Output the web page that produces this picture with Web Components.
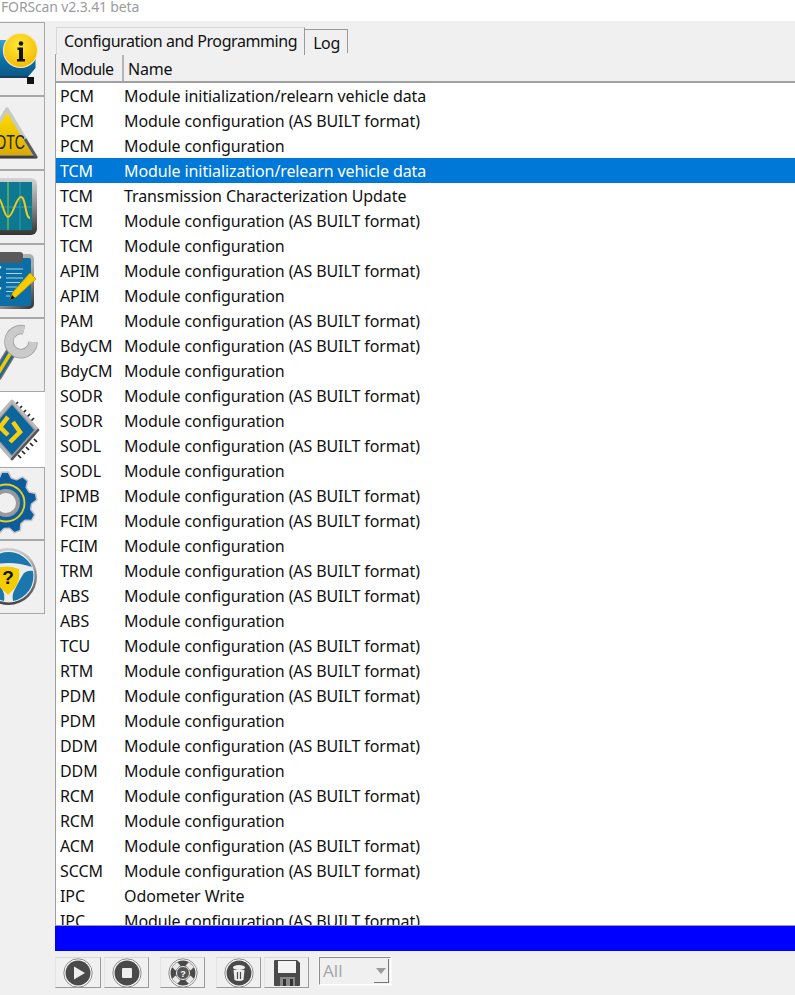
<!DOCTYPE html>
<html>
<head>
<meta charset="utf-8">
<title>FORScan</title>
<style>
html, body { margin: 0; padding: 0; background: #f0f0f0; }
body { width: 795px; height: 995px; overflow: hidden; font: 16px Tahoma, "Noto Sans", sans-serif; }
</style>
</head>
<body>
<forscan-app>
    <side-button slot="side" style="height:74px"><svg width="45" height="73" viewBox="0 0 45 73">
        <defs>
            <linearGradient id="lap" x1="0" y1="0" x2="0" y2="1"><stop offset="0" stop-color="#3aa0d0"/><stop offset=".55" stop-color="#0c6ea6"/><stop offset="1" stop-color="#0a5584"/></linearGradient>
            <radialGradient id="coin" cx=".45" cy=".35" r=".7"><stop offset="0" stop-color="#ffe93a"/><stop offset="1" stop-color="#f2b700"/></radialGradient>
        </defs>
        <path d="M-4 17H34Q36 17 35.500 24V45L27 55H-4Z" fill="url(#lap)"/>
        <path d="M-4 53H28L27 55H-4Z" fill="#1b3e56"/>
        <rect x="27" y="54" width="7" height="7" fill="#111"/>
        <circle cx="20.500" cy="27.500" r="17" fill="url(#coin)" stroke="#f7e7a8" stroke-width="1.200"/>
        <circle cx="21" cy="20.500" r="2.300" fill="#111"/>
        <path d="M17.500 24.500h5.500v11.500h2v2.500h-8v-2.500h2v-9h-1.500z" fill="#111"/>
    </svg></side-button>
    <side-button slot="side" style="height:74px"><svg width="45" height="73" viewBox="0 0 45 73">
        <defs><linearGradient id="warn" x1="0" y1="0" x2="0" y2="1"><stop offset="0" stop-color="#ffe100"/><stop offset="1" stop-color="#d8a800"/></linearGradient></defs>
        <path d="M7 12L-22 60H36Z" fill="url(#warn)" stroke="#c9c9c9" stroke-width="3.500" stroke-linejoin="round"/>
        <path d="M-22 60H36" stroke="#3e3e3e" stroke-width="3" stroke-linecap="round"/>
        <path d="M36 60L25 42" stroke="#5a5a5a" stroke-width="3"/>
        <text x="-4" y="52" font-family="Liberation Sans" font-size="20" fill="#222" textLength="29" lengthAdjust="spacingAndGlyphs">DTC</text>
    </svg></side-button>
    <side-button slot="side" style="height:74px"><svg width="45" height="73" viewBox="0 0 45 73">
        <defs><linearGradient id="bezel" x1="0" y1="0" x2="0" y2="1"><stop offset="0" stop-color="#d4d4d4"/><stop offset=".5" stop-color="#8a8a8a"/><stop offset="1" stop-color="#333"/></linearGradient></defs>
        <rect x="-24" y="7" width="61" height="57" rx="6" fill="url(#bezel)"/>
        <rect x="-20" y="11" width="52" height="48" fill="#0e7891"/>
        <path d="M-20 36H32M20 11V59" stroke="#3d9aa6" stroke-width="1"/>
        <path d="M8 11V59" stroke="#4ea56c" stroke-width="2"/>
        <path d="M-2 27C2 27 4 46 8 46C13 46 16 26 21 26C26 26 25 47 30 47" fill="none" stroke="#e8cc1e" stroke-width="2"/>
    </svg></side-button>
    <side-button slot="side" style="height:74px"><svg width="45" height="73" viewBox="0 0 45 73">
        <defs><linearGradient id="board" x1="0" y1="0" x2="1" y2="1"><stop offset="0" stop-color="#d0d0d0"/><stop offset=".6" stop-color="#a8a8a8"/><stop offset="1" stop-color="#2e2e2e"/></linearGradient></defs>
        <rect x="-20" y="9" width="54" height="55" rx="5" fill="url(#board)"/>
        <rect x="-20" y="13" width="51" height="48" rx="2" fill="#0c6ea6"/>
        <rect x="-10" y="7" width="33" height="11" rx="3" fill="#5a5a5a"/>
        <path d="M6 24H23M6 28.500H22M6 33H23M6 37.500H20M6 42H17M6 46.500H13M6 51H10" stroke="#a6d4e8" stroke-width="1.200"/>
        <path d="M-1 24l2-2.500M-1 34l2-2.500M-1 45l2-2.500" stroke="#fff" stroke-width="1.500"/>
        <path d="M30 28L36 34L16 52L10 55L13 47Z" fill="#f4cd00" stroke="#c89a00" stroke-width=".8"/>
        <path d="M10 55L12 50L15 53Z" fill="#111"/>
    </svg></side-button>
    <side-button slot="side" style="height:74px"><svg width="45" height="73" viewBox="0 0 45 73">
        <path d="M13 30L-4 58" stroke="#6e6e6e" stroke-width="11"/>
        <path d="M13 30L-4 58" stroke="#1b6a9c" stroke-width="8"/>
        <path d="M13 30L-4 58" stroke="#f0c800" stroke-width="3.500"/>
        <path d="M24 11A12 12 0 1 0 33 23" fill="none" stroke="#9a9a9a" stroke-width="9.500"/>
        <path d="M24 11A12 12 0 1 0 33 23" fill="none" stroke="#cacaca" stroke-width="8"/>
    </svg></side-button>
    <side-button slot="side" selected style="height:75px"><svg width="45" height="75" viewBox="0 0 45 75">
        <path d="M18 10l-3 3M22 14l-3 3M26 18l-3 3M30 22l-3 3M34 26l-3 3M37 50l-3-3M33 54l-3-3M29 58l-3-3M25 62l-3-3M21 66l-3-3" stroke="#222" stroke-width="1.700"/>
        <path d="M12 9L38 38L12 67L-14 38Z" fill="#9a9a9a" stroke="#b9b9b9" stroke-width="3" stroke-linejoin="round"/>
        <path d="M38 38L12 67" stroke="#555" stroke-width="2.500" stroke-linecap="round"/>
        <path d="M12 13L34 38L12 63L-10 38Z" fill="#0c659d"/>
        <path d="M8 25L0 35L8 43M13 30L20 40L10 50" fill="none" stroke="#f3cf0e" stroke-width="4.500"/>
    </svg></side-button>
    <side-button slot="side" style="height:73px"><gear-icon></gear-icon></side-button>
    <side-button slot="side" style="height:74px"><svg width="45" height="73" viewBox="0 0 45 73">
        <defs><linearGradient id="rim" x1="0" y1="0" x2="0" y2="1"><stop offset="0" stop-color="#d0d0d0"/><stop offset="1" stop-color="#444"/></linearGradient></defs>
        <circle cx="8.500" cy="35.500" r="28.500" fill="url(#rim)"/>
        <circle cx="8.500" cy="35.500" r="26" fill="#ececec"/>
        <path d="M-15 26A26 26 0 0 1 32 26Q8 18 -15 26Z" fill="#1a76ad"/>
        <path d="M33 30A25.500 25.500 0 0 1 13 60Q12 54 14 50Q20 38 24 32Q28 29 33 30Z" fill="#1a76ad"/>
        <path d="M-16 30A25.500 25.500 0 0 0 4 60Q5 54 3 50Q-3 38 -7 32Q-11 29 -16 30Z" fill="#1a76ad"/>
        <path d="M-8 28Q8 23 19 28Q21 42 12 50L8 54L4 50Q-6 42 -8 28Z" fill="#f5cc00"/>
        <text x="8" y="43" text-anchor="middle" font-family="Liberation Sans" font-size="19" font-weight="bold" fill="#111">?</text>
    </svg></side-button>

    <tab-item slot="tabs" active>Configuration and Programming</tab-item>
    <tab-item slot="tabs">Log</tab-item>

    <module-table slot="table"></module-table>

    <tool-button slot="tools" style="width:46px"><svg width="30" height="30" viewBox="0 0 30 30"><circle cx="15" cy="15" r="14.200" fill="#fff" stroke="#8a8a8a"/><circle cx="15" cy="15" r="12.500" fill="#4a4a4a"/><path d="M11 8.500L22 15L11 21.500Z" fill="#eee"/></svg></tool-button>
    <tool-button slot="tools"><svg width="30" height="30" viewBox="0 0 30 30"><circle cx="15" cy="15" r="14.200" fill="#fff" stroke="#8a8a8a"/><circle cx="15" cy="15" r="12.500" fill="#4a4a4a"/><rect x="10" y="10" width="10" height="10" rx="1" fill="#eee"/></svg></tool-button>
    <tool-button slot="tools" style="margin-left:8px"><svg width="30" height="30" viewBox="0 0 30 30"><circle cx="15" cy="15" r="14.200" fill="#fff" stroke="#8a8a8a"/><circle cx="15" cy="15" r="12.500" fill="#4a4a4a"/><path d="M10 10L6.500 6.500M20 10L23.500 6.500M10 20L6.500 23.500M20 20L23.500 23.500" stroke="#e8e8e8" stroke-width="7"/><circle cx="15" cy="15" r="6.500" fill="#555" stroke="#eee"/><text x="15" y="18.500" text-anchor="middle" font-family="Liberation Sans" font-size="9" font-weight="bold" fill="#fff">?</text></svg></tool-button>
    <tool-button slot="tools" style="margin-left:8px"><svg width="30" height="30" viewBox="0 0 30 30"><circle cx="15" cy="15" r="14.200" fill="#fff" stroke="#8a8a8a"/><circle cx="15" cy="15" r="12.500" fill="#4a4a4a"/><ellipse cx="15" cy="9.500" rx="6" ry="2.500" fill="#eee"/><path d="M9.500 12H20.500L19.500 22Q15 24 10.500 22Z" fill="#eee"/><path d="M13.500 14V21M16.500 14V21" stroke="#4a4a4a" stroke-width="1.200"/></svg></tool-button>
    <tool-button slot="tools"><svg width="30" height="30" viewBox="0 0 30 30"><path d="M3 2H25L28 5V27Q28 28 27 28H3Q2 28 2 27V3Q2 2 3 2Z" fill="#4a4a4a"/><rect x="6" y="3" width="18" height="12" fill="#f4f4f4"/><rect x="8" y="19" width="15" height="9" fill="#8a8a8a"/><rect x="11" y="21" width="3" height="7" fill="#333"/><rect x="18" y="21" width="3" height="7" fill="#333"/></svg></tool-button>
    <combo-box slot="tools">All</combo-box>
</forscan-app>

<script>
const rows = [
    ["PCM", "Module initialization/relearn vehicle data"],
    ["PCM", "Module configuration (AS BUILT format)"],
    ["PCM", "Module configuration"],
    ["TCM", "Module initialization/relearn vehicle data", true],
    ["TCM", "Transmission Characterization Update"],
    ["TCM", "Module configuration (AS BUILT format)"],
    ["TCM", "Module configuration"],
    ["APIM", "Module configuration (AS BUILT format)"],
    ["APIM", "Module configuration"],
    ["PAM", "Module configuration (AS BUILT format)"],
    ["BdyCM", "Module configuration (AS BUILT format)"],
    ["BdyCM", "Module configuration"],
    ["SODR", "Module configuration (AS BUILT format)"],
    ["SODR", "Module configuration"],
    ["SODL", "Module configuration (AS BUILT format)"],
    ["SODL", "Module configuration"],
    ["IPMB", "Module configuration (AS BUILT format)"],
    ["FCIM", "Module configuration (AS BUILT format)"],
    ["FCIM", "Module configuration"],
    ["TRM", "Module configuration (AS BUILT format)"],
    ["ABS", "Module configuration (AS BUILT format)"],
    ["ABS", "Module configuration"],
    ["TCU", "Module configuration (AS BUILT format)"],
    ["RTM", "Module configuration (AS BUILT format)"],
    ["PDM", "Module configuration (AS BUILT format)"],
    ["PDM", "Module configuration"],
    ["DDM", "Module configuration (AS BUILT format)"],
    ["DDM", "Module configuration"],
    ["RCM", "Module configuration (AS BUILT format)"],
    ["RCM", "Module configuration"],
    ["ACM", "Module configuration (AS BUILT format)"],
    ["SCCM", "Module configuration (AS BUILT format)"],
    ["IPC", "Odometer Write"],
    ["IPC", "Module configuration (AS BUILT format)"],
];

class ForscanApp extends HTMLElement {
    constructor() {
        super();
        this.attachShadow({ mode: "open" });
        this.shadowRoot.innerHTML = `
            <style>
            :host { display: block; width: 795px; height: 995px; color: #000; }
            .title {
                height: 21px;
                box-sizing: border-box;
                padding: 1px 0 0 1px;
                background: #fff;
                color: #9c9c9c;
                font-size: 14px;
                line-height: 12px;
                letter-spacing: -0.15px;
                white-space: nowrap;
            }
            .body { display: flex; height: 974px; }
            .side { width: 45px; padding-top: 1px; flex: none; display: flex; flex-direction: column; }
            .main { margin-left: 10px; flex: 1; min-width: 0; display: flex; flex-direction: column; }
            .tabs { height: 33px; padding: 6px 0 0 1px; box-sizing: border-box; display: flex; align-items: flex-start; }
            .table { height: 871px; border-left: 1px solid #a0a0a0; overflow: hidden; background: #fff; }
            .status { height: 25px; background: #0000ff; border-top: 1px solid #9a9a9a; }
            .tools { display: flex; align-items: flex-start; gap: 3px; padding-top: 6px; }
            </style>
            <div class="title">FORScan v2.3.41 beta</div>
            <div class="body">
                <div class="side"><slot name="side"></slot></div>
                <div class="main">
                    <div class="tabs"><slot name="tabs"></slot></div>
                    <div class="table"><slot name="table"></slot></div>
                    <div class="status"></div>
                    <div class="tools"><slot name="tools"></slot></div>
                </div>
            </div>
        `;
    }
}

class SideButton extends HTMLElement {
    constructor() {
        super();
        this.attachShadow({ mode: "open" });
        this.shadowRoot.innerHTML = `
            <style>
            :host {
                display: block;
                width: 45px;
                box-sizing: border-box;
                background: #f0f0f0;
                border-top: 1px solid #a8a8a8;
                border-right: 1px solid #a8a8a8;
                border-bottom: 1px solid #a8a8a8;
                overflow: hidden;
                line-height: 0;
            }
            :host([selected]) { background: #fff; border: none; }
            </style>
            <slot></slot>
        `;
    }
}

// gear outline is easier to generate than to write by hand
class GearIcon extends HTMLElement {
    constructor() {
        super();
        this.attachShadow({ mode: "open" });
        const cx = 6, cy = 35, teeth = 9;
        let d = "";
        for (let i = 0; i < teeth; i++) {
            const a = (i / teeth) * Math.PI * 2 - 0.1;
            const step = (Math.PI * 2) / teeth;
            [[25.5, -0.5], [31, -0.3], [31, 0.0], [25.5, 0.2]].forEach(([r, f]) => {
                const t = a + f * step;
                d += (d ? "L" : "M") + (cx + r * Math.cos(t)).toFixed(1) + " " + (cy + r * Math.sin(t)).toFixed(1);
            });
        }
        this.shadowRoot.innerHTML = `
            <style>:host { display: block; line-height: 0; }</style>
            <svg width="45" height="72" viewBox="0 0 45 72">
                <path d="${d}Z" fill="#0d5c9c" stroke="#c4c4c4" stroke-width="1.500" stroke-linejoin="round"/>
                <circle cx="${cx}" cy="${cy}" r="18.500" fill="#0e619f" stroke="#f0cf1a" stroke-width="1.800"/>
                <circle cx="${cx}" cy="${cy}" r="12" fill="#f0f0f0" stroke="#9a9a9a" stroke-width="4"/>
            </svg>
        `;
    }
}

class TabItem extends HTMLElement {
    constructor() {
        super();
        this.attachShadow({ mode: "open" });
        this.shadowRoot.innerHTML = `
            <style>
            :host {
                display: block;
                box-sizing: border-box;
                height: 24px;
                margin-top: 2px;
                padding: 3px 7px 0 8px;
                line-height: 20px;
                background: #f0f0f0;
                border: 1px solid #9a9a9a;
                border-left: none;
                border-bottom: none;
                white-space: nowrap;
                color: #111;
                letter-spacing: -0.42px;
            }
            :host([active]) {
                height: 28px;
                margin-top: 0;
                padding: 3px 7px 0 7px;
                border-left: 1px solid #d9d9d9;
                border-top-color: #d9d9d9;
                position: relative;
                z-index: 1;
            }
            </style>
            <slot></slot>
        `;
    }
}

class ModuleTable extends HTMLElement {
    constructor() {
        super();
        this.attachShadow({ mode: "open" });
        const body = rows.map(([mod, name, sel]) =>
            `<div class="row${sel ? " sel" : ""}"><span class="mod">${mod}</span><span>${name}</span></div>`
        ).join("");
        this.shadowRoot.innerHTML = `
            <style>
            :host { display: block; }
            .head {
                display: flex;
                height: 29px;
                box-sizing: border-box;
                background: #f0f0f0;
                border-bottom: 2px solid #a0a0a0;
                color: #111;
                line-height: 31px;
            }
            .head span:first-child {
                width: 68px;
                padding-left: 4px;
                box-sizing: border-box;
                border-right: 2px solid #b4b4b4;
                letter-spacing: -0.6px;
            }
            .head span:last-child { padding-left: 4px; letter-spacing: -0.2px; }
            .row { display: flex; height: 25px; line-height: 27px; color: #111; white-space: nowrap; letter-spacing: -0.1px; overflow: hidden; }
            .mod { width: 68px; padding-left: 4px; box-sizing: border-box; flex: none; }
            .sel { background: #0078d7; color: #fff; }
            </style>
            <div class="head"><span>Module</span><span>Name</span></div>
            <div class="rows">${body}</div>
        `;
    }
}

class ToolButton extends HTMLElement {
    constructor() {
        super();
        this.attachShadow({ mode: "open" });
        this.shadowRoot.innerHTML = `
            <style>
            :host {
                display: flex;
                align-items: center;
                justify-content: center;
                width: 45px;
                height: 31px;
                box-sizing: border-box;
                background: #f0f0f0;
                border: 1px solid #e4e4e4;
                border-right-color: #9a9a9a;
                border-bottom-color: #9a9a9a;
                border-top-color: #d8d8d8;
            }
            </style>
            <slot></slot>
        `;
    }
}

class ComboBox extends HTMLElement {
    constructor() {
        super();
        this.attachShadow({ mode: "open" });
        this.shadowRoot.innerHTML = `
            <style>
            :host {
                display: flex;
                margin-left: 7px;
                width: 72px;
                height: 28px;
                box-sizing: border-box;
                background: #f0f0f0;
                border: 1px solid #8c8c8c;
                border-right-color: #fff;
                border-bottom-color: #fff;
                outline: 1px solid #f8f8f8;
                color: #a8a8a8;
                font-size: 17px;
                line-height: 26px;
            }
            .text { flex: 1; padding-left: 3px; }
            .arrow {
                width: 15px;
                margin: 1px 1px 1px 0;
                box-sizing: border-box;
                border-right: 1px solid #777;
                border-bottom: 1px solid #777;
                display: flex;
                align-items: center;
                justify-content: center;
            }
            .arrow i { width: 0; height: 0; border: 5px solid transparent; border-top: 6px solid #9a9a9a; border-bottom: 0; }
            </style>
            <span class="text"><slot></slot></span>
            <span class="arrow"><i></i></span>
        `;
    }
}

customElements.define("forscan-app", ForscanApp);
customElements.define("side-button", SideButton);
customElements.define("gear-icon", GearIcon);
customElements.define("tab-item", TabItem);
customElements.define("module-table", ModuleTable);
customElements.define("tool-button", ToolButton);
customElements.define("combo-box", ComboBox);
</script>
</body>
</html>
